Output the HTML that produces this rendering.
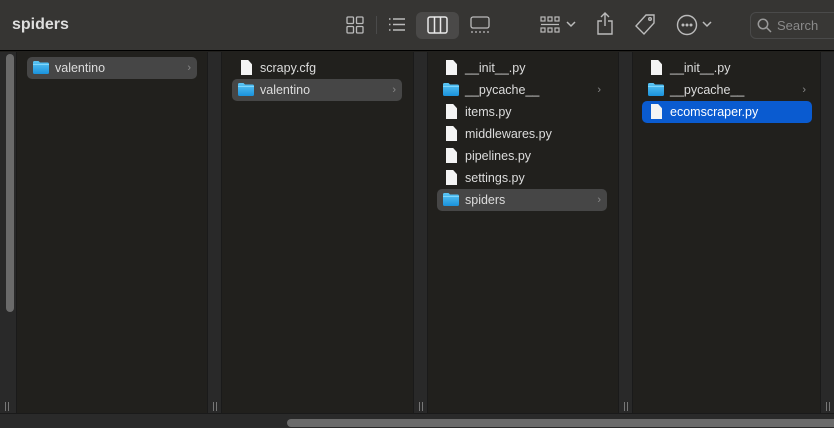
<!DOCTYPE html>
<html><head><style>
*{margin:0;padding:0;box-sizing:border-box}
body{width:834px;height:428px;overflow:hidden;background:#21201d;font-family:"Liberation Sans",sans-serif;position:relative}
.tb{position:absolute;left:0;top:0;width:834px;height:51px;background:#363533;border-bottom:1px solid #000}
.title{position:absolute;left:12px;top:16px;color:#dedede;font-weight:bold;font-size:16px}
.strip{position:absolute;top:52px;height:361px;background:#292929;border-left:1px solid #1a1a1a;border-right:1px solid #1a1a1a}
.grip{position:absolute;bottom:2px;left:5px;width:4px;height:9px;border-left:1px solid #777;border-right:1px solid #777}
.row{position:absolute;height:22px;color:#dcdcdc;font-size:12.5px;line-height:22px;padding-left:28px}
.sel{background:#464646;border-radius:5px}
.blue{background:#0a5bd0;border-radius:5px;color:#fff}
.chev{position:absolute;right:6px;top:0;color:#888;font-size:11px}
.fold{position:absolute;left:6px;top:4px;width:16px;height:13px}
.file{position:absolute;left:9px;top:3px;width:11px;height:15px;background:#f4f4f4;clip-path:polygon(0 0,65% 0,100% 28%,100% 100%,0 100%)}
svg{position:absolute}
</style></head><body>
<div class="tb">
<div class="title">spiders</div>
<svg style="left:346px;top:16px" width="18" height="18" viewBox="0 0 18 18" fill="none" stroke="#bbb" stroke-width="1.3"><rect x="1" y="1" width="6.5" height="6.5" rx="1"/><rect x="10.5" y="1" width="6.5" height="6.5" rx="1"/><rect x="1" y="10.5" width="6.5" height="6.5" rx="1"/><rect x="10.5" y="10.5" width="6.5" height="6.5" rx="1"/></svg>
<div style="position:absolute;left:376px;top:16px;width:1px;height:18px;background:#4a4a4a"></div>
<svg style="left:388px;top:17px" width="18" height="15" viewBox="0 0 18 15" stroke="#bbb" stroke-width="1.4"><path d="M1 2h1.5M1 7.5h1.5M1 13h1.5M5 2h12M5 7.5h12M5 13h12"/></svg>
<div style="position:absolute;left:416px;top:12px;width:43px;height:27px;background:#4a4948;border-radius:6px"></div>
<svg style="left:427px;top:16px" width="21" height="18" viewBox="0 0 21 18" fill="none" stroke="#e8e8e8" stroke-width="1.5"><rect x="1" y="1" width="19" height="16" rx="2"/><path d="M7.5 1v16M13.5 1v16"/></svg>
<svg style="left:470px;top:16px" width="20" height="18" viewBox="0 0 20 18" fill="none" stroke="#bbb" stroke-width="1.3"><rect x="1" y="1" width="18" height="11" rx="2"/><path d="M1 16h2M5 16h2M9 16h2M13 16h2M17 16h2"/></svg>
<svg style="left:540px;top:16px" width="20" height="18" viewBox="0 0 20 18" fill="none" stroke="#bbb" stroke-width="1.2"><rect x="1" y="1" width="4" height="4"/><rect x="8" y="1" width="4" height="4"/><rect x="15" y="1" width="4" height="4"/><path d="M1 8.5h18"/><rect x="1" y="12" width="4" height="4"/><rect x="8" y="12" width="4" height="4"/><rect x="15" y="12" width="4" height="4"/></svg>
<svg style="left:566px;top:21px" width="10" height="7" viewBox="0 0 10 7" fill="none" stroke="#bbb" stroke-width="1.5"><path d="M1 1l4 4 4-4"/></svg>
<svg style="left:596px;top:12px" width="18" height="23" viewBox="0 0 18 23" fill="none" stroke="#bbb" stroke-width="1.4"><path d="M9 1v13M5 5l4-4 4 4M6 9H2v13h14V9h-4"/></svg>
<svg style="left:634px;top:14px" width="22" height="22" viewBox="0 0 22 22" fill="none" stroke="#bbb" stroke-width="1.4"><path d="M12 1h8v8L10 20 2 12z"/><circle cx="16" cy="5" r="1.3"/></svg>
<svg style="left:676px;top:14px" width="22" height="22" viewBox="0 0 22 22" fill="none" stroke="#bbb" stroke-width="1.4"><circle cx="11" cy="11" r="9.5"/><circle cx="7" cy="11" r=".8" fill="#bbb"/><circle cx="11" cy="11" r=".8" fill="#bbb"/><circle cx="15" cy="11" r=".8" fill="#bbb"/></svg>
<svg style="left:702px;top:21px" width="10" height="7" viewBox="0 0 10 7" fill="none" stroke="#bbb" stroke-width="1.5"><path d="M1 1l4 4 4-4"/></svg>
<div style="position:absolute;left:750px;top:12px;width:90px;height:27px;border:1px solid #4a4a4a;border-radius:6px;background:#383735"></div>
<svg style="left:757px;top:18px" width="15" height="15" viewBox="0 0 15 15" fill="none" stroke="#999" stroke-width="1.5"><circle cx="6" cy="6" r="4.7"/><path d="M9.5 9.5l4.5 4.5"/></svg>
<div style="position:absolute;left:777px;top:18px;color:#8a8a8a;font-size:13px">Search</div>
</div>

<div class="strip" style="left:0;width:17px;border-left:none"><div style="position:absolute;left:6px;top:2px;width:8px;height:258px;background:#6a6a6a;border-radius:4px"></div><div class="grip"></div></div>
<div class="strip" style="left:207px;width:15px"><div class="grip"></div></div>
<div class="strip" style="left:413px;width:15px"><div class="grip"></div></div>
<div class="strip" style="left:618px;width:15px"><div class="grip"></div></div>
<div class="strip" style="left:820px;width:14px;border-right:none"><div class="grip"></div></div>
<div style="position:absolute;left:0;top:413px;width:834px;height:15px;background:#2a2a2a;border-top:1px solid #1a1a1a"></div>
<div style="position:absolute;left:287px;top:419px;width:560px;height:8px;background:#6b6b6b;border-radius:4px"></div>

<svg width="0" height="0"><defs><linearGradient id="fg" x1="0" y1="0" x2="0" y2="1"><stop offset="0" stop-color="#5cc6f5"/><stop offset="1" stop-color="#1a92dc"/></linearGradient></defs></svg>

<div class="row sel" style="left:27px;top:57px;width:170px">valentino<span class="chev">›</span><div class="fold"><svg width="16" height="13"><path d="M0 1.5Q0 0 1.5 0h4l1.5 1.5h7.5Q16 1.5 16 3v8.5Q16 13 14.5 13h-13Q0 13 0 11.5z" fill="url(#fg)"/><path d="M0 3.5h16" stroke="#7fd6fb" stroke-width="1"/></svg></div></div>
<div class="row" style="left:232px;top:57px;width:170px">scrapy.cfg<div class="file"></div></div>
<div class="row sel" style="left:232px;top:79px;width:170px">valentino<span class="chev">›</span><div class="fold"><svg width="16" height="13"><path d="M0 1.5Q0 0 1.5 0h4l1.5 1.5h7.5Q16 1.5 16 3v8.5Q16 13 14.5 13h-13Q0 13 0 11.5z" fill="url(#fg)"/><path d="M0 3.5h16" stroke="#7fd6fb" stroke-width="1"/></svg></div></div>
<div class="row" style="left:437px;top:57px;width:170px">__init__.py<div class="file"></div></div>
<div class="row" style="left:437px;top:79px;width:170px">__pycache__<span class="chev">›</span><div class="fold"><svg width="16" height="13"><path d="M0 1.5Q0 0 1.5 0h4l1.5 1.5h7.5Q16 1.5 16 3v8.5Q16 13 14.5 13h-13Q0 13 0 11.5z" fill="url(#fg)"/><path d="M0 3.5h16" stroke="#7fd6fb" stroke-width="1"/></svg></div></div>
<div class="row" style="left:437px;top:101px;width:170px">items.py<div class="file"></div></div>
<div class="row" style="left:437px;top:123px;width:170px">middlewares.py<div class="file"></div></div>
<div class="row" style="left:437px;top:145px;width:170px">pipelines.py<div class="file"></div></div>
<div class="row" style="left:437px;top:167px;width:170px">settings.py<div class="file"></div></div>
<div class="row sel" style="left:437px;top:189px;width:170px">spiders<span class="chev">›</span><div class="fold"><svg width="16" height="13"><path d="M0 1.5Q0 0 1.5 0h4l1.5 1.5h7.5Q16 1.5 16 3v8.5Q16 13 14.5 13h-13Q0 13 0 11.5z" fill="url(#fg)"/><path d="M0 3.5h16" stroke="#7fd6fb" stroke-width="1"/></svg></div></div>
<div class="row" style="left:642px;top:57px;width:170px">__init__.py<div class="file"></div></div>
<div class="row" style="left:642px;top:79px;width:170px">__pycache__<span class="chev">›</span><div class="fold"><svg width="16" height="13"><path d="M0 1.5Q0 0 1.5 0h4l1.5 1.5h7.5Q16 1.5 16 3v8.5Q16 13 14.5 13h-13Q0 13 0 11.5z" fill="url(#fg)"/><path d="M0 3.5h16" stroke="#7fd6fb" stroke-width="1"/></svg></div></div>
<div class="row blue" style="left:642px;top:101px;width:170px">ecomscraper.py<div class="file"></div></div>
</body></html>
